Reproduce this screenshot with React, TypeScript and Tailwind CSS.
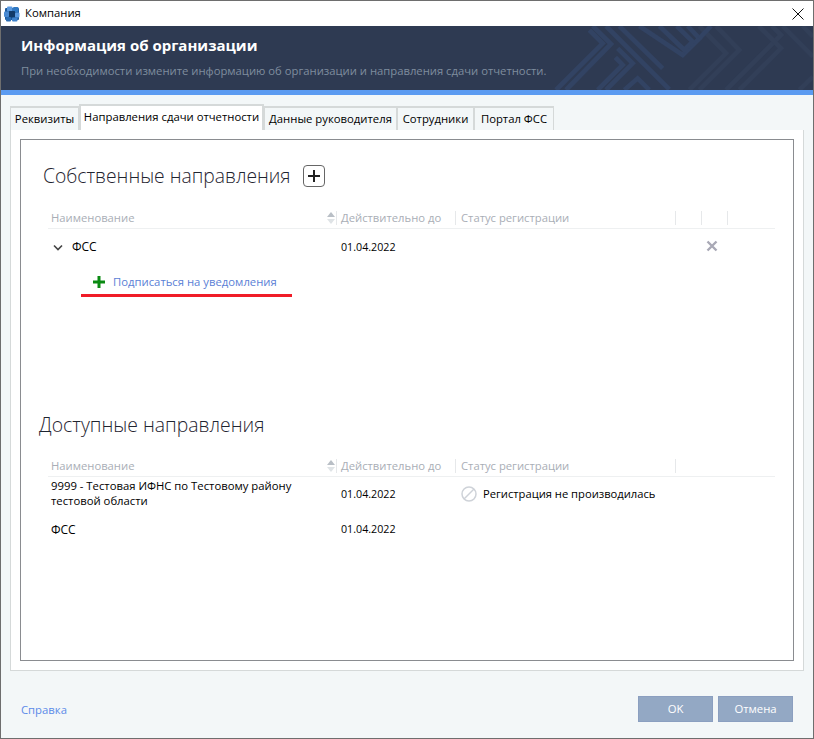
import React from 'react';

const tabs = [
  { label: 'Реквизиты', width: 'w-[69px]' },
  { label: 'Направления сдачи отчетности', width: 'w-[185px]' },
  { label: 'Данные руководителя', width: 'w-[133px]' },
  { label: 'Сотрудники', width: 'w-[77px]' },
  { label: 'Портал ФСС', width: 'w-[80px]' },
];

// paths are in the coordinates of the right half of the header, scaled 3x
const HeaderPattern = () => (
  <svg className="absolute right-0 top-0 h-[64px] w-[407px]" viewBox="0 78 1221 192" fill="none" strokeWidth="14">
    <g stroke="#323f58">
      <path d="M960 270 L1125 105 L1098 78" />
      <path d="M1000 270 L1125 145 L1058 78" />
      <path d="M1130 78 L1221 170" />
      <path d="M1190 78 L1221 110" />
      <path d="M1180 270 L1221 230" />
      <path d="M880 270 L1000 150 L930 78" />
      <path d="M850 270 L960 160 L880 78" />
    </g>
    <g stroke="#324363">
      <path d="M450 270 L590 130 L550 90" />
      <path d="M480 270 L615 132 L560 78" />
      <path d="M575 270 L650 195 L628 172" />
      <path d="M600 270 L680 190 L635 145" />
      <path d="M600 78 L790 268" />
      <path d="M640 78 L770 205" />
      <path d="M700 78 L830 165 L880 115 L845 78" />
      <path d="M880 115 L915 78" />
      <path d="M760 78 L835 150 L860 125 L812 78" />
      <path d="M655 270 L695 235 L730 270" />
    </g>
  </svg>
);

const AppIcon = () => (
  <svg width="16" height="16" viewBox="0 0 16 16">
    <rect x="1" y="2" width="14" height="12" rx="1" fill="#1d5a9c" />
    <rect x="3" y="0.5" width="5.5" height="5" rx="1" fill="#5b9ae0" />
    <rect x="9" y="1" width="5.5" height="5" rx="1" fill="#2f78c2" />
    <rect x="0" y="5.5" width="5" height="5.5" rx="1" fill="#4a8ad2" />
    <rect x="5" y="5" width="6" height="6.5" rx="0.5" fill="#123a68" />
    <rect x="11" y="6.5" width="4.5" height="5" rx="1" fill="#5b9ae0" />
    <rect x="2" y="11" width="5" height="4.5" rx="1" fill="#2a6cb3" />
    <rect x="8" y="11.5" width="5.5" height="4" rx="1" fill="#3f82cc" />
  </svg>
);

const SortIcon = () => (
  <svg width="8" height="12" viewBox="0 0 8 12" className="shrink-0">
    <path d="M4 0 L8 5 L0 5 Z" fill="#b9bfc6" />
    <path d="M4 12 L8 7 L0 7 Z" fill="#dfe3e6" />
  </svg>
);

const Divider = () => <div className="h-[14px] w-px bg-[#e6e8ea]" />;

const TableHead = ({ extra }: { extra?: boolean }) => (
  <div className="flex h-[22px] w-[727px] items-center border-b border-[#eef0f1] text-[11.25px] text-[#a9aeb6]">
    <div className="flex w-[288px] items-center justify-between pl-[3px] pr-[1px]">
      <span className="pt-[2px]">Наименование</span>
      <SortIcon />
    </div>
    <Divider />
    <span className="w-[118px] pl-1 pt-[2px]">Действительно до</span>
    <Divider />
    <span className="w-[219px] pl-[5px] pt-[2px]">Статус регистрации</span>
    <Divider />
    {extra && (
      <>
        <div className="w-[25px]" />
        <Divider />
        <div className="w-[25px]" />
        <Divider />
      </>
    )}
  </div>
);

export default function App() {
  return (
    <div className="flex h-[739px] w-[814px] flex-col overflow-hidden border border-[#6e6e6e] bg-[#f3f7f8] font-['Open_Sans','Noto_Sans',sans-serif] text-[11.3px] text-black">
      <div className="flex h-[25px] shrink-0 items-center justify-between bg-white pl-[3px] pr-[9px]">
        <div className="flex items-center gap-[5px]">
          <AppIcon />
          <span>Компания</span>
        </div>
        <svg width="12" height="12" viewBox="0 0 12 12">
          <path d="M0.5 0.5L11.5 11.5M11.5 0.5L0.5 11.5" stroke="#111" strokeWidth="1" />
        </svg>
      </div>

      <div className="relative h-[64px] shrink-0 overflow-hidden bg-[#2e3a52] pl-[20px] pt-[8px]">
        <HeaderPattern />
        <div className="relative text-[15px] leading-[22px] font-bold text-white">Информация об организации</div>
        <div className="relative mt-[6px] text-[11.27px] leading-[18px] text-[#7f8d9e]">
          При необходимости измените информацию об организации и направления сдачи отчетности.
        </div>
      </div>
      <div className="h-[5px] shrink-0 bg-[#5b9bf1]" />

      <div className="flex h-[35px] shrink-0 items-end pl-[9px]">
        {tabs.map((t, i) =>
          i === 1 ? (
            <div key={t.label} className={`z-10 flex h-[26px] ${t.width} items-center justify-center border-x-2 border-t-2 border-[#d5d9d9] bg-white pb-[1px]`}>
              {t.label}
            </div>
          ) : (
            <div key={t.label} className={`flex h-[24px] ${t.width} items-center justify-center border-x border-t-2 border-[#d5d9d9] bg-[#f3f7f8]`}>
              {t.label}
            </div>
          ),
        )}
      </div>

      <div className="mx-[9px] h-[541px] border border-t-0 border-[#d5d9d9] bg-white px-[9px] pt-[9px] pb-[9px]">
        <div className="h-full border border-[#8a8c90] pl-[27px]">
          <div className="mt-[21px] flex h-[30px] items-center gap-[12px]">
            <span className="ml-[-5px] text-[19.3px] font-light text-[#1f2430]">Собственные направления</span>
            <span className="flex h-[22px] w-[22px] items-center justify-center rounded-[4px] border border-[#666] text-[#222]">
              <svg width="14" height="14" viewBox="0 0 14 14">
                <path d="M7 1V13M1 7H13" stroke="currentColor" strokeWidth="2" />
              </svg>
            </span>
          </div>
          <div className="mt-[16px]">
            <TableHead extra />
          </div>
          <div className="relative flex h-[36px] w-[727px] items-center">
            <div className="flex w-[288px] items-center pl-[5px] text-[12px]">
              <svg width="10" height="7" viewBox="0 0 10 7" className="mr-[9px]">
                <path d="M1 1.5L5 5.5L9 1.5" fill="none" stroke="#444" strokeWidth="1.6" />
              </svg>
              <span>ФСС</span>
            </div>
            <span className="pl-[5px] text-[10.7px]">01.04.2022</span>
            <svg width="12" height="12" viewBox="0 0 12 12" className="absolute left-[658px] top-[11px]">
              <path d="M1.5 1.5L10.5 10.5M10.5 1.5L1.5 10.5" stroke="#a9a9b6" strokeWidth="2.4" />
            </svg>
          </div>
          <div className="ml-[33px] mt-[8px] w-[211px]">
            <div className="flex h-[18px] items-center pl-[12px]">
              <svg width="12" height="12" viewBox="0 0 12 12" className="mr-[8px]">
                <path d="M6 0V12M0 6H12" stroke="#0a8a12" strokeWidth="3" />
              </svg>
              <span className="text-[#5b7fd6]">Подписаться на уведомления</span>
            </div>
            <div className="mt-[3px] h-[3px] bg-[#f01c28]" />
          </div>

          <div className="ml-[-9px] mt-[113px] h-[30px] text-[19.4px] leading-[30px] font-light text-[#1f2430]">Доступные направления</div>
          <div className="mt-[15px]">
            <TableHead />
          </div>
          <div className="flex h-[36px] w-[727px] items-center pb-[2px]">
            <div className="w-[288px] pb-[2px] pl-[3px] leading-[15px]">
              9999 - Тестовая ИФНС по Тестовому району
              <br />
              тестовой области
            </div>
            <span className="w-[119px] pl-[5px] text-[10.7px]">01.04.2022</span>
            <div className="flex items-center gap-[6px] pl-[6px]">
              <svg width="16" height="16" viewBox="0 0 16 16">
                <circle cx="8" cy="8" r="7" fill="none" stroke="#ced2d8" strokeWidth="1.5" />
                <path d="M3 13L13 3" stroke="#ced2d8" strokeWidth="1.5" />
              </svg>
              <span className="text-[11.2px]">Регистрация не производилась</span>
            </div>
          </div>
          <div className="flex h-[33px] w-[727px] items-center">
            <div className="w-[288px] pl-[3px] text-[12px]">ФСС</div>
            <span className="pl-[5px] text-[10.7px]">01.04.2022</span>
          </div>
        </div>
      </div>

      <div className="flex flex-1 items-center justify-between pl-[20px] pr-[20px] pt-[9px]">
        <span className="pt-[2px] text-[#5b8be8]">Справка</span>
        <div className="flex gap-[5px]">
          <div className="flex h-[26px] w-[75px] items-center justify-center border border-[#8b9fc0] bg-[#93a8c4] text-white">OK</div>
          <div className="flex h-[26px] w-[75px] items-center justify-center border border-[#8b9fc0] bg-[#93a8c4] text-white">Отмена</div>
        </div>
      </div>
    </div>
  );
}
